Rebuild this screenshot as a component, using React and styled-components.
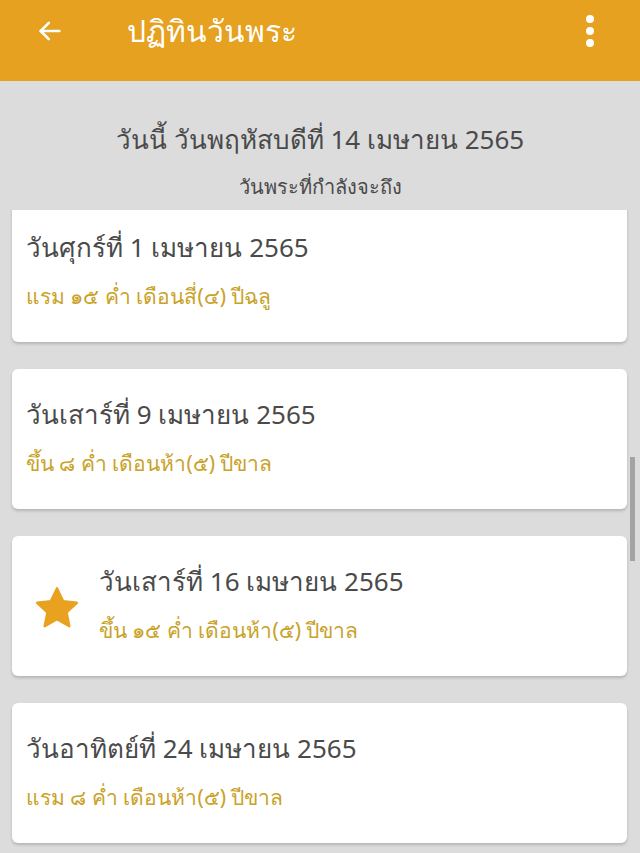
import React from "react";
import styled, { createGlobalStyle } from "styled-components";

const days = [
    { date: "วันศุกร์ที่ 1 เมษายน 2565", lunar: "แรม ๑๕ ค่ำ เดือนสี่(๔) ปีฉลู" },
    { date: "วันเสาร์ที่ 9 เมษายน 2565", lunar: "ขึ้น ๘ ค่ำ เดือนห้า(๕) ปีขาล" },
    { date: "วันเสาร์ที่ 16 เมษายน 2565", lunar: "ขึ้น ๑๕ ค่ำ เดือนห้า(๕) ปีขาล", star: true },
    { date: "วันอาทิตย์ที่ 24 เมษายน 2565", lunar: "แรม ๘ ค่ำ เดือนห้า(๕) ปีขาล" },
];

function App() {
    return (
        <>
            <GlobalStyle />
            <Page>
                <TopBar>
                    <BackButton aria-label="back">
                        <svg width="28" height="28" viewBox="0 0 24 24" fill="none" stroke="#fff" strokeWidth="2.2" strokeLinecap="round" strokeLinejoin="round">
                            <path d="M20 12H4" />
                            <path d="M11 5l-7 7 7 7" />
                        </svg>
                    </BackButton>
                    <BarTitle>ปฏิทินวันพระ</BarTitle>
                    <MenuDots>
                        <Dot />
                        <Dot />
                        <Dot />
                    </MenuDots>
                </TopBar>

                <Today>วันนี้ วันพฤหัสบดีที่ 14 เมษายน 2565</Today>
                <Upcoming>วันพระที่กำลังจะถึง</Upcoming>

                <ListArea>
                    <List>
                        {days.map((d) => (
                            <Card key={d.date}>
                                {d.star && (
                                    <StarIcon viewBox="0 0 24 24">
                                        <path d="M12 2.6l2.9 6.1 6.6.8-4.9 4.6 1.3 6.6L12 17.4l-5.9 3.3 1.3-6.6-4.9-4.6 6.6-.8z" fill="#e8a21f" stroke="#e8a21f" strokeWidth="1.2" strokeLinejoin="round" />
                                    </StarIcon>
                                )}
                                <CardText>
                                    <DateLine>{d.date}</DateLine>
                                    <LunarLine>{d.lunar}</LunarLine>
                                </CardText>
                            </Card>
                        ))}
                    </List>
                    <ScrollThumb />
                </ListArea>
            </Page>
        </>
    );
}

const GlobalStyle = createGlobalStyle`
    html, body {
        margin: 0;
        padding: 0;
        background: #dcdcdc;
    }
    body {
        font-family: "Noto Sans", "DejaVu Sans", sans-serif;
    }
`
const Page = styled.div`
    width: 640px;
    height: 853px;
    display: flex;
    flex-direction: column;
    background: #dcdcdc;
    overflow: hidden;
`
const TopBar = styled.header`
    height: 81px;
    flex-shrink: 0;
    display: flex;
    align-items: center;
    padding: 0 46px 19px 36px;
    box-sizing: border-box;
    background: #e5a11f;
    color: #fff;
`
const BackButton = styled.div`
    display: flex;
    width: 28px;
    height: 28px;
`
const BarTitle = styled.h1`
    flex: 1;
    margin: 0 0 0 63px;
    font-size: 30px;
    font-weight: 400;
    color: #fff;
`
const MenuDots = styled.div`
    display: flex;
    flex-direction: column;
    gap: 4px;
`
const Dot = styled.span`
    width: 8px;
    height: 8px;
    border-radius: 50%;
    background: #fff;
`
const Today = styled.div`
    margin-top: 38px;
    text-align: center;
    font-size: 26px;
    color: #4a4a4a;
`
const Upcoming = styled.div`
    margin-top: 11px;
    text-align: center;
    font-size: 20px;
    color: #4a4a4a;
`
const ListArea = styled.div`
    position: relative;
    flex: 1;
    margin-top: 7px;
    overflow: hidden;
`
const List = styled.div`
    display: flex;
    flex-direction: column;
    gap: 27px;
    padding: 0 13px 0 12px;
    margin-top: -8px;
`
const Card = styled.div`
    height: 140px;
    display: flex;
    align-items: center;
    gap: 17px;
    padding: 0 14px 4px 14px;
    box-sizing: border-box;
    background: #fff;
    border-radius: 6px;
    box-shadow: 0 2px 3px rgba(0, 0, 0, 0.18);
`
const StarIcon = styled.svg`
    width: 50px;
    height: 50px;
    margin-left: 6px;
    margin-top: 8px;
    flex-shrink: 0;
`
const CardText = styled.div`
    display: flex;
    flex-direction: column;
    gap: 12px;
`
const DateLine = styled.div`
    font-size: 26px;
    color: #4a4a4a;
`
const LunarLine = styled.div`
    font-size: 21px;
    color: #c9a227;
`
const ScrollThumb = styled.div`
    position: absolute;
    right: 5px;
    top: 247px;
    width: 5px;
    height: 104px;
    background: #a3a3a3;
`

export default App;
